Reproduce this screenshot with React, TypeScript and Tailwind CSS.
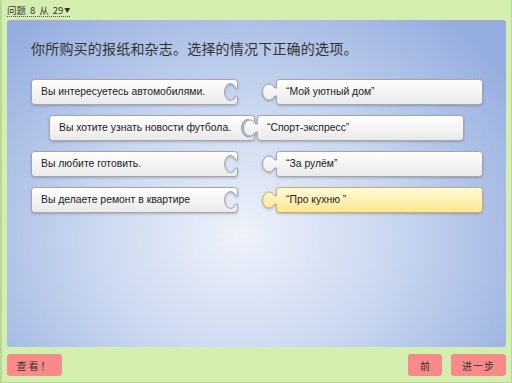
import React, { useId } from "react";

const T = 14;

function Piece({
  w,
  h = 26,
  kind,
  yellow = false,
  text,
  className = "",
}: {
  w: number;
  h?: number;
  kind: "notch" | "tab";
  yellow?: boolean;
  text: string;
  className?: string;
}) {
  const id = useId().replace(/:/g, "");
  const c = h / 2;
  const r = 3;
  let d = "";
  let total = w;
  if (kind === "notch") {
    const W = w - 0.5;
    const rx = 6;
    const ry = 8.5;
    const cx = w - 7.5;
    const nh = 4;
    const nx = cx + rx * Math.sqrt(1 - (nh / ry) ** 2);
    d = `M ${0.5 + r} 0.5 H ${W - r} Q ${W} 0.5 ${W} ${0.5 + r} V ${c - nh} H ${nx} A ${rx} ${ry} 0 1 0 ${nx} ${c + nh} H ${W} V ${h - 0.5 - r} Q ${W} ${h - 0.5} ${W - r} ${h - 0.5} H ${0.5 + r} Q 0.5 ${h - 0.5} 0.5 ${h - 0.5 - r} V ${0.5 + r} Q 0.5 0.5 ${0.5 + r} 0.5 Z`;
  } else {
    total = w + T;
    const L = T + 0.5;
    const W = total - 0.5;
    const rx = 6.5;
    const ry = 8;
    const cx = T - 7;
    const nh = 4;
    const nx = cx + rx * Math.sqrt(1 - (nh / ry) ** 2);
    d = `M ${L + r} 0.5 H ${W - r} Q ${W} 0.5 ${W} ${0.5 + r} V ${h - 0.5 - r} Q ${W} ${h - 0.5} ${W - r} ${h - 0.5} H ${L + r} Q ${L} ${h - 0.5} ${L} ${h - 0.5 - r} V ${c + nh} H ${nx} A ${rx} ${ry} 0 1 1 ${nx} ${c - nh} H ${L} V ${0.5 + r} Q ${L} 0.5 ${L + r} 0.5 Z`;
  }
  const top = yellow ? "#fffbdc" : "#ffffff";
  const bot = yellow ? "#fde68c" : "#e9e9e9";
  const stroke = yellow ? "#c4b067" : "#a6a6a6";
  return (
    <div
      className={`relative flex items-center shrink-0 ${className}`}
      style={{ width: total, height: h }}
    >
      <svg
        width={total}
        height={h}
        className="absolute left-0 top-0 drop-shadow-[0_1px_1px_rgba(40,60,100,0.3)]"
      >
        <defs>
          <linearGradient id={`g${id}`} x1="0" y1="0" x2="0" y2="1">
            <stop offset="0" stopColor={top} />
            <stop offset="1" stopColor={bot} />
          </linearGradient>
        </defs>
        <path d={d} fill={`url(#g${id})`} stroke={stroke} strokeWidth="1" />
      </svg>
      <span
        className="relative text-[10.4px] text-[#222] font-['Liberation_Sans',Arial,sans-serif] whitespace-nowrap"
        style={{ paddingLeft: kind === "tab" ? T + 10 : 10 }}
      >
        {text}
      </span>
    </div>
  );
}

export default function App() {
  return (
    <div className="w-[512px] h-[383px] bg-[#d4eeb0] flex flex-col border-l-2 border-r border-b border-[#b9d898] font-['Noto_Sans_CJK_SC',sans-serif] overflow-hidden">
      <div className="h-[20px] pl-[5px] pt-[4px] flex items-start">
        <span className="text-[9.5px] leading-[12px] text-[#333] border-b border-dotted border-[#555] flex items-center gap-[4px]">
          <span>问题</span>
          <span>8</span>
          <span>从</span>
          <span>29</span>
          <span className="text-[6px] -ml-[3px]">▼</span>
        </span>
      </div>
      <div className="ml-[5px] mr-[5px] h-[327px] rounded-[3px] bg-[radial-gradient(ellipse_65%_85%_at_47%_66%,#eef2fa_0%,#cbd8f0_45%,#96aedf_100%)] pl-[24px] pt-[18px] flex flex-col">
        <div className="text-[14px] leading-[20px] text-[#333] tracking-[0.2px]">
          你所购买的报纸和杂志。选择的情况下正确的选项。
        </div>
        <div className="mt-[21px] flex flex-col gap-[10px]">
          <div className="flex">
            <Piece w={207} kind="notch" text="Вы интересуетесь автомобилями." />
            <Piece w={207} kind="tab" text="“Мой уютный дом”" className="ml-[24px]" />
          </div>
          <div className="flex pl-[18px]">
            <Piece w={206} kind="notch" text="Вы хотите узнать новости футбола." />
            <Piece w={207} kind="tab" text="“Спорт-экспресс”" className="ml-[-12px]" />
          </div>
          <div className="flex">
            <Piece w={207} kind="notch" text="Вы любите готовить." />
            <Piece w={207} kind="tab" text="“За рулём”" className="ml-[24px]" />
          </div>
          <div className="flex">
            <Piece w={207} kind="notch" text="Вы делаете ремонт в квартире" />
            <Piece w={207} kind="tab" yellow text="“Про кухню ”" className="ml-[24px]" />
          </div>
        </div>
      </div>
      <div className="flex items-start pt-[7px] pl-[5px] pr-[5px]">
        <button className="w-[55px] h-[22px] rounded-[3px] bg-[#f98a8a] text-[10px] text-[#333] tracking-[2px]">
          查看！
        </button>
        <div className="flex-1" />
        <button className="w-[34px] h-[22px] rounded-[3px] bg-[#f98a8a] text-[10px] text-[#333]">
          前
        </button>
        <button className="ml-[9px] w-[55px] h-[22px] rounded-[3px] bg-[#f98a8a] text-[10px] text-[#333] tracking-[1px]">
          进一步
        </button>
      </div>
    </div>
  );
}
